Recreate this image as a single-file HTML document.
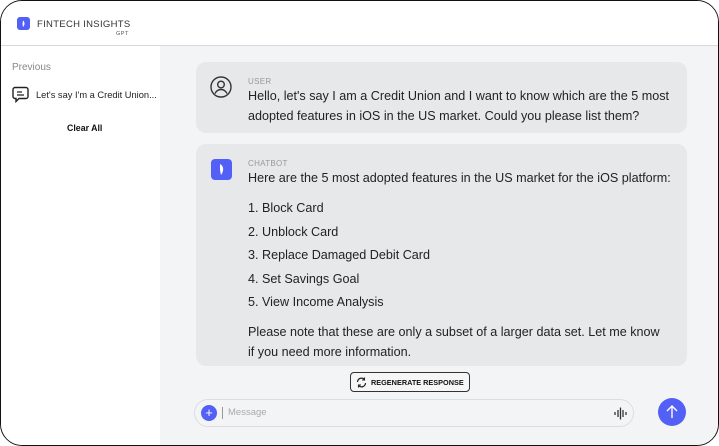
<!DOCTYPE html>
<html><head><style>
*{box-sizing:border-box;margin:0;padding:0}
body{width:719px;height:446px;background:#fff;font-family:"Liberation Sans",sans-serif;overflow:hidden;position:relative}
.frame{position:absolute;left:0;top:0;width:719px;height:446px;border:1.5px solid #111;border-radius:22px;overflow:hidden;background:#fff}
.hdr{position:absolute;left:0;top:0;width:100%;height:45px;border-bottom:1px solid #d8d9de;background:#fff}
.side{position:absolute;left:0;top:45px;width:159px;bottom:0;background:#fff}
.main{position:absolute;left:159px;top:45px;right:0;bottom:0;background:#f3f4f6}
.bub{position:absolute;left:36px;width:491px;background:#e7e8ea;border-radius:10px}
.lbl{position:absolute;left:52px;font-size:8px;color:#999;letter-spacing:.3px}
.txt{position:absolute;left:52px;font-size:12.6px;color:#222;line-height:19.5px}
</style></head><body><div class="frame">
<div class="hdr">
 <div style="position:absolute;left:16px;top:16px;width:13px;height:13px;background:#5360f5;border-radius:3px"></div>
 <svg style="position:absolute;left:16px;top:16px" width="13" height="13"><path d="M6 3.5 C8 5 8 8 6 10 L5.5 7 Z" fill="#fff"/></svg>
 <div style="position:absolute;left:36px;top:18px;font-size:9.5px;color:#333;letter-spacing:.3px">FINTECH INSIGHTS</div>
 <div style="position:absolute;left:115px;top:30px;font-size:5.5px;color:#555;letter-spacing:.5px">GPT</div>
</div>
<div class="side">
 <div style="position:absolute;left:11px;top:16px;font-size:10px;color:#888">Previous</div>
 <svg style="position:absolute;left:11px;top:40px" width="17" height="17" viewBox="0 0 17 17"><path d="M3 1.5h11a2 2 0 0 1 2 2v7a2 2 0 0 1-2 2H7l-3 3v-3H3a2 2 0 0 1-2-2v-7a2 2 0 0 1 2-2z" fill="none" stroke="#222" stroke-width="1.4"/><path d="M5 6h5M5 9h7" stroke="#222" stroke-width="1.3"/></svg>
 <div style="position:absolute;left:35px;top:44px;font-size:9.3px;color:#222">Let's say I'm a Credit Union...</div>
 <div style="position:absolute;left:66px;top:77px;font-size:8.8px;color:#111;font-weight:bold">Clear All</div>
</div>
<div class="main">
 <div class="bub" style="top:16px;height:71px">
  <svg style="position:absolute;left:14px;top:14px" width="22" height="22" viewBox="0 0 22 22"><circle cx="11" cy="11" r="10" fill="none" stroke="#333" stroke-width="1.4"/><circle cx="11" cy="8.5" r="3.3" fill="none" stroke="#333" stroke-width="1.4"/><path d="M5 17.5c1.5-3 3.5-4 6-4s4.5 1 6 4" fill="none" stroke="#333" stroke-width="1.4"/></svg>
  <div class="lbl" style="top:15px">USER</div>
  <div class="txt" style="top:25px">Hello, let's say I am a Credit Union and I want to know which are the 5 most<br>adopted features in iOS in the US market. Could you please list them?</div>
 </div>
 <div class="bub" style="top:98px;height:222px">
  <div style="position:absolute;left:15px;top:15px;width:21px;height:21px;background:#5360f5;border-radius:4px"></div>
  <svg style="position:absolute;left:15px;top:15px" width="21" height="21"><path d="M9 5 C13 7 13 12 10 16 L9 11 Z" fill="#fff"/></svg>
  <div class="lbl" style="top:15px">CHATBOT</div>
  <div class="txt" style="top:25px">Here are the 5 most adopted features in the US market for the iOS platform:</div>
  <div class="txt" style="top:53px;line-height:23.5px">1. Block Card<br>2. Unblock Card<br>3. Replace Damaged Debit Card<br>4. Set Savings Goal<br>5. View Income Analysis</div>
  <div class="txt" style="top:179px">Please note that these are only a subset of a larger data set. Let me know<br>if you need more information.</div>
 </div>
 <div style="position:absolute;left:190px;top:326px;width:120px;height:20px;border:1px solid #333;border-radius:4px;background:#f6f6f7">
  <svg style="position:absolute;left:5px;top:4px" width="11" height="11" viewBox="0 0 11 11"><path d="M1.5 5a4 4 0 0 1 7-2.5M9.5 6a4 4 0 0 1-7 2.5" fill="none" stroke="#222" stroke-width="1.2"/><path d="M8.5 0.5v2.5h-2.5M2.5 10.5V8h2.5" fill="none" stroke="#222" stroke-width="1.1"/></svg>
  <div style="position:absolute;left:20px;top:5px;font-size:7.3px;font-weight:bold;color:#111">REGENERATE RESPONSE</div>
 </div>
 <div style="position:absolute;left:34px;top:353px;width:440px;height:28px;border:1px solid #dcdde0;border-radius:14px;background:#f3f4f6">
  <div style="position:absolute;left:6px;top:5px;width:16px;height:16px;border-radius:50%;background:#5360f5;color:#fff;font-size:13px;line-height:16px;text-align:center">+</div>
  <div style="position:absolute;left:27px;top:7px;width:1px;height:12px;background:#999"></div>
  <div style="position:absolute;left:33px;top:7px;font-size:9.5px;color:#aaa">Message</div>
  <svg style="position:absolute;left:419px;top:7px" width="14" height="13"><path d="M1 5v3M4 3v7M6.5 0.5v12M9 3v7M12 5v3" stroke="#333" stroke-width="1.3"/></svg>
 </div>
 <div style="position:absolute;left:498px;top:352px;width:28px;height:28px;border-radius:50%;background:#5360f5">
  <svg width="28" height="28"><path d="M14 20V8M9 13l5-5 5 5" fill="none" stroke="#fff" stroke-width="1.4"/></svg>
 </div>
</div>
</div></body></html>
